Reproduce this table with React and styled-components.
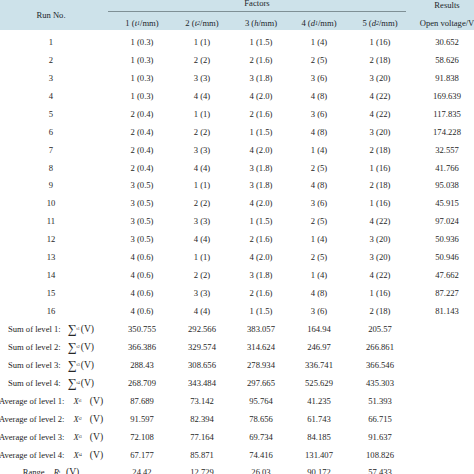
import React from "react";
import styled, { createGlobalStyle } from "styled-components";

const Global = createGlobalStyle`
  html, body { margin: 0; padding: 0; background: #ffffff; overflow: hidden; }
  body { font-family: "Liberation Serif", "Times New Roman", serif; }
`;

const COLS = "112px 60px 60px 58px 58px 64px 70px";

const Table = styled.div`
  width: 482px;
  font-size: 8.6px;
  color: #262626;
  line-height: 10px;
`;

const Head = styled.div`
  display: grid;
  grid-template-columns: ${COLS};
  grid-template-rows: 12px 18px;
  background: #cde2ea;
  color: #1c262b;
`;

const Cell = styled.div`
  display: flex;
  align-items: center;
  justify-content: center;
  white-space: nowrap;
  padding-right: ${(p) => (p.$first ? "10px" : "0")};
  padding-top: ${(p) => p.$top || 0}px;
  grid-column: ${(p) => p.$col || "auto"};
  grid-row: ${(p) => p.$row || "auto"};
`;

const Factors = styled(Cell)`
  align-items: flex-end;
  padding-bottom: 3px;
  margin: 0 6px 0 -4px;
  border-bottom: 1px solid #7f9096;
`;

const TopCell = styled(Cell)`
  align-items: flex-end;
  padding-bottom: 2px;
`;

const Body = styled.div`
  padding-top: 3px;
`;

const Row = styled.div`
  display: grid;
  grid-template-columns: ${COLS};
  height: 17.94px;
`;

const Label = styled.span`
  display: inline-flex;
  align-items: center;
`;

const Sigma = styled.span`
  font-size: 12.5px;
  margin-left: 7px;
  line-height: 10px;
`;

const Sub = styled.sub`
  font-size: 4px;
  vertical-align: -2px;
  line-height: 0;
`;

const Unit = styled.span`
  font-size: 9.6px;
  margin-left: ${(p) => p.$gap || 0}px;
`;

const Var = styled.i`
  margin-left: ${(p) => p.$gap || 0}px;
`;

const Hsub = styled.sub`
  font-size: 6px;
  vertical-align: -2px;
  line-height: 0;
  font-style: italic;
`;

const runs = [
  ["1 (0.3)", "1 (1)", "1 (1.5)", "1 (4)", "1 (16)", "30.652"],
  ["1 (0.3)", "2 (2)", "2 (1.6)", "2 (5)", "2 (18)", "58.626"],
  ["1 (0.3)", "3 (3)", "3 (1.8)", "3 (6)", "3 (20)", "91.838"],
  ["1 (0.3)", "4 (4)", "4 (2.0)", "4 (8)", "4 (22)", "169.639"],
  ["2 (0.4)", "1 (1)", "2 (1.6)", "3 (6)", "4 (22)", "117.835"],
  ["2 (0.4)", "2 (2)", "1 (1.5)", "4 (8)", "3 (20)", "174.228"],
  ["2 (0.4)", "3 (3)", "4 (2.0)", "1 (4)", "2 (18)", "32.557"],
  ["2 (0.4)", "4 (4)", "3 (1.8)", "2 (5)", "1 (16)", "41.766"],
  ["3 (0.5)", "1 (1)", "3 (1.8)", "4 (8)", "2 (18)", "95.038"],
  ["3 (0.5)", "2 (2)", "4 (2.0)", "3 (6)", "1 (16)", "45.915"],
  ["3 (0.5)", "3 (3)", "1 (1.5)", "2 (5)", "4 (22)", "97.024"],
  ["3 (0.5)", "4 (4)", "2 (1.6)", "1 (4)", "3 (20)", "50.936"],
  ["4 (0.6)", "1 (1)", "4 (2.0)", "2 (5)", "3 (20)", "50.946"],
  ["4 (0.6)", "2 (2)", "3 (1.8)", "1 (4)", "4 (22)", "47.662"],
  ["4 (0.6)", "3 (3)", "2 (1.6)", "4 (8)", "1 (16)", "87.227"],
  ["4 (0.6)", "4 (4)", "1 (1.5)", "3 (6)", "2 (18)", "81.143"],
];

const sums = [
  ["350.755", "292.566", "383.057", "164.94", "205.57"],
  ["366.386", "329.574", "314.624", "246.97", "266.861"],
  ["288.43", "308.656", "278.934", "336.741", "366.546"],
  ["268.709", "343.484", "297.665", "525.629", "435.303"],
];

const avgs = [
  ["87.689", "73.142", "95.764", "41.235", "51.393"],
  ["91.597", "82.394", "78.656", "61.743", "66.715"],
  ["72.108", "77.164", "69.734", "84.185", "91.637"],
  ["67.177", "85.871", "74.416", "131.407", "108.826"],
];

const range = ["24.42", "12.729", "26.03", "90.172", "57.433"];

function DataRow({ label, values }) {
  return (
    <Row>
      <Cell $first>{label}</Cell>
      {values.map((v, i) => (
        <Cell key={i}>{v}</Cell>
      ))}
      {values.length < 6 && <Cell />}
    </Row>
  );
}

export default function App() {
  return (
    <>
      <Global />
      <Table>
        <Head>
          <Cell $first $col="1" $row="1 / span 2">Run No.</Cell>
          <Factors $col="2 / span 5" $row="1">Factors</Factors>
          <TopCell $col="7" $row="1">Results</TopCell>
          <Cell $row="2" $top={3}>1 (<i>t</i><Hsub>1</Hsub>/mm)</Cell>
          <Cell $row="2" $top={3}>2 (<i>t</i><Hsub>2</Hsub>/mm)</Cell>
          <Cell $row="2" $top={3}>3 (<i>h</i>/mm)</Cell>
          <Cell $row="2" $top={3}>4 (<i>d</i><Hsub>1</Hsub>/mm)</Cell>
          <Cell $row="2" $top={3}>5 (<i>d</i><Hsub>2</Hsub>/mm)</Cell>
          <Cell $row="2" $top={3}>Open voltage/V</Cell>
        </Head>
        <Body>
          {runs.map((r, i) => (
            <DataRow key={i} label={String(i + 1)} values={r} />
          ))}
          {sums.map((r, i) => (
            <DataRow
              key={"s" + i}
              label={
                <Label>
                  Sum of level {i + 1}:
                  <Sigma>∑</Sigma>
                  <Sub>t{i + 1}</Sub>
                  <Unit $gap={1}>(V)</Unit>
                </Label>
              }
              values={r}
            />
          ))}
          {avgs.map((r, i) => (
            <DataRow
              key={"a" + i}
              label={
                <Label>
                  Average of level {i + 1}:
                  <Var $gap={9}>X</Var>
                  <Sub>t{i + 1}</Sub>
                  <Unit $gap={8}>(V)</Unit>
                </Label>
              }
              values={r}
            />
          ))}
          <DataRow
            label={
              <Label>
                Range
                <Var $gap={9}>R</Var>
                <Sub>t</Sub>
                <Unit $gap={6}>(V)</Unit>
              </Label>
            }
            values={range}
          />
        </Body>
      </Table>
    </>
  );
}
